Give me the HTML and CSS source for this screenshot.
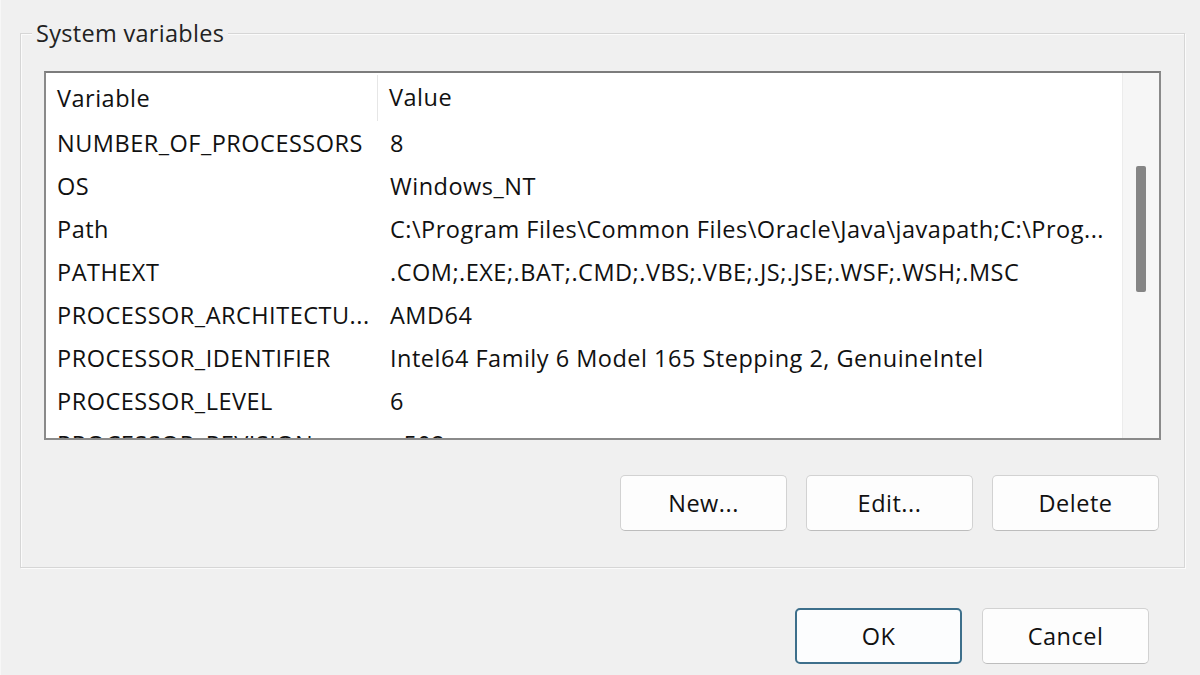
FILE: index.html
```html
<!DOCTYPE html>
<html lang="en">
<head>
<meta charset="utf-8">
<title>System variables</title>
<link rel="stylesheet" href="styles.css">
</head>
<body class="dialog">
  <div class="group">
    <div class="legend">System variables</div>
    <div class="listbox">
      <div class="table">
        <div class="row head">
          <div class="cell var">Variable</div>
          <div class="cell val">Value</div>
        </div>
        <div class="row"><div class="cell var">NUMBER_OF_PROCESSORS</div><div class="cell val">8</div></div>
        <div class="row"><div class="cell var">OS</div><div class="cell val">Windows_NT</div></div>
        <div class="row"><div class="cell var">Path</div><div class="cell val">C:\Program Files\Common Files\Oracle\Java\javapath;C:\Prog...</div></div>
        <div class="row"><div class="cell var">PATHEXT</div><div class="cell val">.COM;.EXE;.BAT;.CMD;.VBS;.VBE;.JS;.JSE;.WSF;.WSH;.MSC</div></div>
        <div class="row"><div class="cell var">PROCESSOR_ARCHITECTU...</div><div class="cell val">AMD64</div></div>
        <div class="row"><div class="cell var">PROCESSOR_IDENTIFIER</div><div class="cell val">Intel64 Family 6 Model 165 Stepping 2, GenuineIntel</div></div>
        <div class="row"><div class="cell var">PROCESSOR_LEVEL</div><div class="cell val">6</div></div>
        <div class="row"><div class="cell var">PROCESSOR_REVISION</div><div class="cell val">a502</div></div>
      </div>
      <div class="scrollbar"><div class="thumb"></div></div>
    </div>
    <div class="actions">
      <button class="btn">New...</button>
      <button class="btn">Edit...</button>
      <button class="btn">Delete</button>
    </div>
  </div>
  <div class="footer">
    <button class="btn default">OK</button>
    <button class="btn">Cancel</button>
  </div>
</body>
</html>
```

FILE: styles.css
```css
html, body {
  margin: 0;
  padding: 0;
}
.dialog {
  width: 1200px;
  height: 675px;
  overflow: hidden;
  background: #f0f0f0;
  font-family: "Open Sans", "Noto Sans", "DejaVu Sans", sans-serif;
  font-size: 23.5px;
  letter-spacing: 0.5px;
  color: #111;
  box-sizing: border-box;
  padding-top: 33px;
  border-left: 1px solid #f7f7f7;
}
.group {
  margin: 0 15px 0 19px;
  border: 1px solid #d6d6d6;
  box-shadow: inset 1px 1px 0 #fbfbfb, 1px 1px 0 #fbfbfb;
  padding: 0 23px 36px 23px;
}
.legend {
  display: block;
  width: max-content;
  margin: -16px 0 0 -12px;
  padding: 0 4px 0 4px;
  height: 30px;
  line-height: 30px;
  background: #f0f0f0;
  color: #222;
  letter-spacing: 0.3px;
}
.listbox {
  margin-top: 23px;
  height: 369px;
  box-sizing: border-box;
  border: 2px solid #8a8a8a;
  border-top-color: #7c7c7c;
  background: #fff;
  display: flex;
  overflow: hidden;
}
.table {
  flex: 1;
  overflow: hidden;
}
.row {
  display: grid;
  grid-template-columns: 332px 1fr;
  height: 43px;
  align-items: center;
}
.row.head {
  height: 48px;
  align-items: stretch;
}
.cell {
  white-space: nowrap;
  overflow: hidden;
}
.cell.var {
  padding-left: 11px;
}
.cell.val {
  padding-left: 12px;
}
.head .cell {
  display: flex;
  align-items: center;
}
.head .cell.var {
  border-right: 1px solid #e6e6e6;
  margin-top: 2px;
}
.head .cell.val {
  padding-left: 11px;
}
.scrollbar {
  width: 37px;
  background: #f6f6f6;
  border-left: 1px solid #ececec;
  box-sizing: border-box;
  padding: 93px 0 0 13px;
}
.thumb {
  width: 10px;
  height: 126px;
  background: #858585;
  border-radius: 2px;
}
.actions {
  margin-top: 35px;
  display: flex;
  justify-content: flex-end;
  gap: 19px;
  padding-right: 2px;
}
.btn {
  width: 167px;
  height: 56px;
  box-sizing: border-box;
  font-family: inherit;
  font-size: 23.5px;
  letter-spacing: 0.5px;
  color: #111;
  background: #fdfdfd;
  border: 1px solid #d2d2d2;
  border-bottom-color: #bdbdbd;
  border-radius: 5px;
  padding: 0;
}
.btn.default {
  border: 2px solid #3d6f8b;
  background: #fcfdfe;
}
.footer {
  margin-top: 40px;
  display: flex;
  justify-content: flex-end;
  gap: 20px;
  padding-right: 51px;
}
```
